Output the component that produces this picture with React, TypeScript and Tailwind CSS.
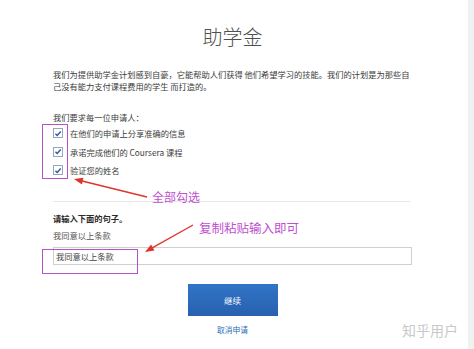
import React from 'react';

const FONT = '"Noto Sans CJK SC", "Noto Sans", sans-serif';

const CheckRow: React.FC<{ label: string }> = ({ label }) => (
    <div className="flex h-[18.5px] items-center">
        <span className="flex h-[10px] w-[10px] items-center justify-center border border-[#9aa6b8] bg-white">
            <svg viewBox="0 0 10 10" className="h-[9px] w-[9px]">
                <path d="M1.8 5.2 L4 7.4 L8.4 2.4" fill="none" stroke="#2a5aa8" strokeWidth="1.8" />
            </svg>
        </span>
        <span className="ml-[7px]">{label}</span>
    </div>
);

export default function App() {
    return (
        <div
            className="relative flex h-[349px] w-[474px] overflow-hidden bg-white text-[8.25px] leading-[12px] text-[#3c3c3c]"
            style={{ fontFamily: FONT }}
        >
            {/* main column */}
            <div className="flex flex-1 flex-col pl-[53px] pr-[56px] pt-[26px]">
                <h1 className="text-center text-[20px] font-light leading-[22px] text-[#505050]">助学金</h1>

                <p className="mt-[20px]">
                    我们为提供助学金计划感到自豪，它能帮助人们获得 他们希望学习的技能。我们的计划是为那些自己没有能力支付课程费用的学生 而打造的。
                </p>

                <p className="mt-[19px]">我们要求每一位申请人：</p>

                <div className="mt-[1px] flex flex-col">
                    <CheckRow label="在他们的申请上分享准确的信息" />
                    <CheckRow label="承诺完成他们的 Coursera 课程" />
                    <CheckRow label="验证您的姓名" />
                </div>

                <div className="mt-[21px] mr-[2px] h-px bg-[#e6e6e6]" />

                <p className="mt-[10px] font-bold text-[#2a2a2a]">请输入下面的句子。</p>
                <p className="mt-[5px] text-[#555]">我同意以上条款</p>

                <div className="mt-[6px] flex h-[18px] items-center border border-[#cfcfcf] px-[2px] text-[#444]">
                    我同意以上条款
                </div>

                <div className="mt-[19px] flex justify-center">
                    <button className="h-[32px] w-[90px] bg-gradient-to-b from-[#3174c6] to-[#2861b0] text-[8.5px] text-white">
                        继续
                    </button>
                </div>

                <div className="mt-[8px] text-center text-[7.75px] text-[#2d6db5]">取消申请</div>
            </div>

            {/* right scrollbar strip */}
            <div className="w-[6px] bg-[#f1f1f1]" />

            {/* annotations */}
            <div className="pointer-events-none absolute left-[42px] top-[124px] h-[55px] w-[26px] border-[1.5px] border-[#b453c8]" />
            <div className="pointer-events-none absolute left-[42px] top-[249px] h-[25px] w-[96px] border-[1.5px] border-[#b453c8]" />

            <svg className="pointer-events-none absolute left-0 top-0 h-[349px] w-[474px]" viewBox="0 0 474 349">
                <line x1="147" y1="197" x2="80" y2="180.5" stroke="#e0342a" strokeWidth="1.4" />
                <polygon points="74,179 83.5,177.8 81.9,184.6" fill="#e0342a" />
                <line x1="193" y1="225" x2="150" y2="249.2" stroke="#e0342a" strokeWidth="1.4" />
                <polygon points="145,252 151.1,244.5 154.5,250.6" fill="#e0342a" />
            </svg>

            <div className="absolute left-[152px] top-[190px] text-[12px] leading-[14px] text-[#c04fd0]">全部勾选</div>
            <div className="absolute left-[199px] top-[220px] text-[12.5px] leading-[15px] text-[#c04fd0]">复制粘贴输入即可</div>

            <div className="absolute left-[402px] top-[322px] text-[14px] leading-[16px] text-[#c9c9c9]">知乎用户</div>
        </div>
    );
}
